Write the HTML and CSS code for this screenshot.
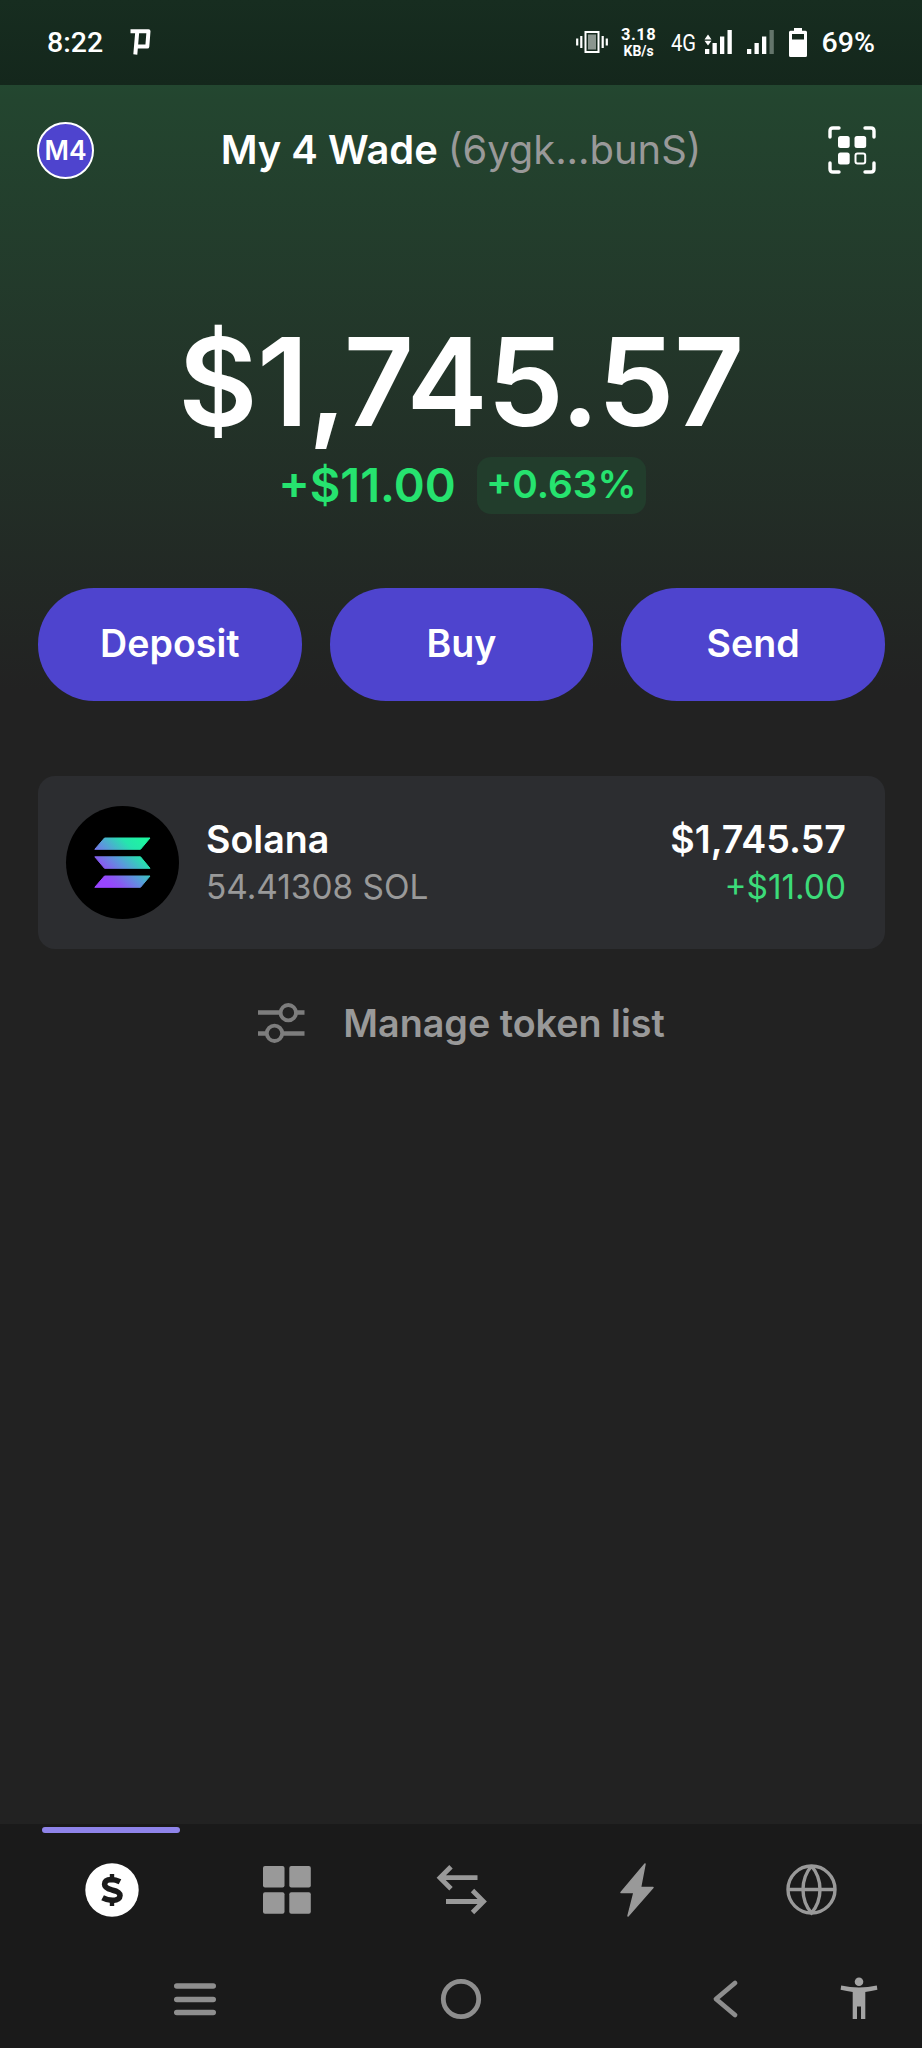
FILE: index.html
```html
<!DOCTYPE html>
<html lang="en">
<head>
<meta charset="utf-8">
<title>Wallet</title>
<link rel="stylesheet" href="styles.css">
</head>
<body>
<div class="screen">
  <div class="status">
    <span class="clock">8:22</span>
    <svg class="app-mark" width="22" height="27" viewBox="0 0 22 27"><path d="M1.500 2.200H19.500L18.300 17.500H8.500M8.300 2.200L6.300 25.500" fill="none" stroke="#fff" stroke-width="4" stroke-linejoin="round"/></svg>
    <div class="status-right">
      <svg class="vibrate" width="32" height="22" viewBox="0 0 32 22"><rect x="9.500" y="1" width="13" height="20" fill="none" stroke="#fff" stroke-width="2"/><rect x="12" y="3.500" width="8" height="15" fill="#8b968f"/><path d="M1.200 7.500v7M5.300 5v12M26.700 5v12M30.800 7.500v7" stroke="#fff" stroke-width="2.200"/></svg>
      <div class="speed"><span class="rate">3.18</span><span class="unit">KB/s</span></div>
      <span class="net">4G</span>
      <svg class="sig1" width="27" height="24" viewBox="0 0 27 24" fill="#fff"><path d="M3 4.500L6.500 9.500H-.5zM3 15.500L6.500 10.800H-.5z"/><rect x="0" y="19" width="4.300" height="5"/><rect x="7.500" y="13" width="4.300" height="11"/><rect x="15" y="6.500" width="4.300" height="17.500"/><rect x="22.500" y="0" width="4.300" height="24"/></svg>
      <svg class="sig2" width="27" height="24" viewBox="0 0 27 24" fill="#fff"><rect x="0" y="19" width="4.300" height="5"/><rect x="7.500" y="13" width="4.300" height="11"/><rect x="15" y="6.500" width="4.300" height="17.500"/><rect x="22.500" y="0" width="4.300" height="24" fill="#64756b"/></svg>
      <svg class="batt" width="18" height="29" viewBox="0 0 18 29"><path d="M5 0h8v2.800h3.500q1.500 0 1.500 1.500V27.500q0 1.500-1.500 1.500h-15Q0 29 0 27.500V4.300q0-1.500 1.500-1.500H5z" fill="#fff"/><rect x="3" y="6" width="12" height="5.500" fill="#15291d"/></svg>
      <span class="pct">69%</span>
    </div>
  </div>

  <div class="header">
    <div class="avatar">M4</div>
    <div class="title">My 4 Wade <span class="addr">(6ygk...bunS)</span></div>
    <svg class="scan" width="48" height="48" viewBox="0 0 48 48" fill="none" stroke="#fff"><path d="M2 11V5q0-3 3-3h6M37 2h6q3 0 3 3v6M46 37v6q0 3-3 3h-6M11 46H5q-3 0-3-3v-6" stroke-width="3.400" stroke-linecap="round"/><g fill="#fff" stroke="none"><rect x="10" y="10" width="11.700" height="12" rx="2.500"/><rect x="26.500" y="10" width="11.700" height="12" rx="2.500"/><rect x="10" y="26.500" width="11.700" height="12" rx="2.500"/></g><rect x="27.500" y="27.500" width="9.700" height="10" rx="2" stroke-width="2"/></svg>
  </div>

  <div class="balance">$1,745.57</div>
  <div class="change"><span class="delta">+$11.00</span><span class="badge">+0.63%</span></div>

  <div class="actions">
    <div class="btn">Deposit</div>
    <div class="btn">Buy</div>
    <div class="btn">Send</div>
  </div>

  <div class="token">
    <svg class="sol" width="113" height="113" viewBox="0 0 113 113"><defs><linearGradient id="g" gradientUnits="userSpaceOnUse" x1="78" y1="34" x2="38" y2="74"><stop offset="0" stop-color="#1df5a0"/><stop offset=".25" stop-color="#25e5ae"/><stop offset=".58" stop-color="#5b98dc"/><stop offset=".85" stop-color="#8a58f2"/><stop offset="1" stop-color="#9945ff"/></linearGradient></defs><circle cx="56.500" cy="56.500" r="56.500"/><g fill="url(#g)" stroke="url(#g)" stroke-width="1" stroke-linejoin="round"><path d="M38.500 32H84L74.500 43.300H28.800z"/><path d="M28.800 50.800H74.500L84 62.300H38.500z"/><path d="M38.500 70H84L74.500 81.300H28.800z"/></g></svg>
    <div class="col"><span class="name">Solana</span><span class="sub">54.41308 SOL</span></div>
    <div class="col right"><span class="name">$1,745.57</span><span class="sub up">+$11.00</span></div>
  </div>

  <div class="manage">
    <svg width="47" height="40" viewBox="0 0 47 40" fill="none" stroke="#7d7d7d"><path d="M0 9.500H22M39 9.500H46.500M0 30.500H8M25 30.500H46.500" stroke-width="4.600"/><circle cx="30.300" cy="9.700" r="7.700" stroke-width="3.800"/><circle cx="16.500" cy="30.300" r="7.700" stroke-width="3.800"/></svg>
    <span>Manage token list</span>
  </div>

  <div class="bottom">
    <div class="tabs">
      <div class="tab active"><svg width="54" height="54" viewBox="0 0 54 54"><circle cx="27" cy="27" r="26.700" fill="#fff"/><path d="M35 18.800Q30.500 16.500 26.500 16.500Q19.600 16.700 19.600 21.300Q19.600 25 27 26.900Q35 28.600 35 32.500Q34.800 37 27.600 37.400Q22.500 37.400 17.600 34.800" fill="none" stroke="#1a1a1a" stroke-width="5.600"/><path d="M27 11v6M27 37v6" stroke="#1a1a1a" stroke-width="4.400"/></svg></div>
      <div class="tab"><svg width="48" height="48" viewBox="0 0 48 48" fill="#999"><rect width="21.500" height="21.500" rx="2"/><rect x="26.300" width="21.500" height="21.500" rx="2"/><rect y="26.300" width="21.500" height="21.500" rx="2"/><rect x="26.300" y="26.300" width="21.500" height="21.500" rx="2"/></svg></div>
      <div class="tab"><svg width="50" height="50" viewBox="0 0 50 50" fill="none" stroke="#999" stroke-width="4.800"><path d="M40.500 12.700H3M14 1.700L3 12.700L14 23.700M9 36.500H46.500M35.500 25.500L46.500 36.500L35.500 47.500"/></svg></div>
      <div class="tab"><svg width="34" height="54" viewBox="0 0 34 54"><path d="M25 1L1 29.500H14L8 53L33 24.500H20.500z" fill="#999" stroke="#999" stroke-width="1.500" stroke-linejoin="round"/></svg></div>
      <div class="tab"><svg width="51" height="51" viewBox="0 0 51 51" fill="none" stroke="#999" stroke-width="3.400"><circle cx="25.500" cy="25.500" r="23.500"/><path d="M2 25.500H49M25.500 2Q17 12 17 25.500T25.500 49Q34 39 34 25.500T25.500 2"/></svg></div>
    </div>
    <div class="nav">
      <svg class="n-menu" width="42" height="33" viewBox="0 0 42 33" stroke="#8e8e8e" stroke-width="5.600" stroke-linecap="round"><path d="M2.800 3H39.200M2.800 16.500H39.200M2.800 29.500H39.200"/></svg>
      <svg class="n-home" width="42" height="42" viewBox="0 0 42 42"><circle cx="21" cy="21" r="17.700" fill="none" stroke="#8e8e8e" stroke-width="4.800"/></svg>
      <svg class="n-back" width="25" height="38" viewBox="0 0 25 38"><path d="M22 3L3 19L22 35" fill="none" stroke="#8e8e8e" stroke-width="4.800" stroke-linecap="round" stroke-linejoin="round"/></svg>
      <svg class="n-acc" width="38" height="43" viewBox="0 0 38 43" fill="#a3a3a3"><circle cx="19" cy="4.800" r="4.300"/><path d="M1.200 8.600Q19 12.500 36.800 8.600L37.400 12.800Q31 14.300 25.300 14.900V42H21V29.500H17V42H12.700V14.900Q7 14.300.6 12.800z"/></svg>
    </div>
  </div>
</div>
</body>
</html>
```

FILE: styles.css
```css
body { margin: 0; }
* { box-sizing: border-box; }
svg { display: block; flex: none; overflow: visible; }
.screen {
  width: 922px; height: 2048px; display: flex; flex-direction: column;
  background: linear-gradient(#234730 85px, #23452f 100px, #222 690px);
  color: #fff; font-family: Inter, "Liberation Sans", sans-serif;
  white-space: nowrap; overflow: hidden;
}
.status {
  flex: none; height: 85px; padding: 0 47px 0 47px; display: flex;
  background: linear-gradient(#172d20, #14271c);
  font-family: Roboto, sans-serif; font-size: 28.5px; font-weight: 500; line-height: 32px;
}
.clock, .pct { margin-top: 27px; }
.app-mark { margin: 29px 0 0 26px; }
.status-right { margin-left: auto; display: flex; align-items: flex-start; }
.vibrate { margin: 31px 14px 0 0; }
.speed { display: flex; flex-direction: column; align-items: center; width: 34px; margin: 26px 15px 0 0; font-weight: 700; }
.rate { font-size: 16.5px; line-height: 17px; letter-spacing: .5px; }
.unit { font-size: 14px; line-height: 16px; }
.net { width: 25px; margin: 27px 9px 0 0; font-size: 24px; font-weight: 400; transform: scaleX(.84); transform-origin: 0 0; }
.sig1 { margin: 30px 15px 0 0; }
.sig2 { margin: 30px 15px 0 0; }
.batt { margin: 28px 15px 0 0; }

.header { flex: none; height: 130px; padding: 0 46px 0 37px; display: flex; align-items: center; justify-content: space-between; }
.avatar { width: 57px; height: 57px; border: 2px solid #fff; border-radius: 50%; background: #4e44ce; display: flex; align-items: center; justify-content: center; font-size: 26.5px; font-weight: 600; }
.title { font-size: 39.9px; font-weight: 600; line-height: 48px; }
.addr { font-weight: 400; color: #999; }

.balance { flex: none; margin-top: 91px; font-size: 122px; font-weight: 600; line-height: 151px; letter-spacing: -.5px; text-align: center; }
.change { flex: none; height: 56px; padding-left: 2px; display: flex; align-items: center; justify-content: center; gap: 21px; }
.delta { margin-top: -2px; font-size: 47px; font-weight: 600; color: #26e36f; }
.badge { height: 57px; width: 169px; border-radius: 14px; background: #223d2c; color: #26e36f; font-size: 38.8px; font-weight: 600; line-height: 53px; text-align: center; }

.actions { flex: none; margin-top: 75px; padding: 0 37px 0 38px; display: grid; grid-template-columns: repeat(3, 1fr); gap: 28px; }
.btn { height: 113px; border-radius: 56px; background: #4e44ce; font-size: 37.6px; font-weight: 600; line-height: 111px; text-align: center; }

.token { flex: none; margin: 75px 37px 0 38px; height: 173px; padding: 0 39px 0 28px; border-radius: 17px; background: #2c2d30; display: flex; align-items: center; }
.col { display: flex; flex-direction: column; margin-left: 27px; gap: 2px; }
.right { margin-left: auto; align-items: flex-end; }
.name { font-size: 37.6px; font-weight: 600; line-height: 46px; }
.sub { font-size: 33.4px; line-height: 44px; color: #999; }
.up { color: #3cdb79; }

.manage { flex: none; height: 50px; margin-top: 49px; padding-left: 1px; display: flex; align-items: center; justify-content: center; gap: 38px; font-size: 37.7px; font-weight: 600; color: #999; }
.manage span { margin-top: -1px; }

.bottom { margin-top: auto; height: 224px; background: #1a1a1a; display: flex; flex-direction: column; }
.tabs { height: 131px; padding: 0 23px 0 24px; display: grid; grid-template-columns: repeat(5, 1fr); }
.tab { display: flex; align-items: center; justify-content: center; }
.active { position: relative; }
.active::before { content: ""; position: absolute; left: 18px; top: 3px; width: 138px; height: 6px; border-radius: 3px; background: #8f84ea; }
.nav { height: 93px; display: flex; padding: 0 44px 0 174px; }
.n-menu { margin-top: 28px; }
.n-home { margin: 23px 0 0 224px; }
.n-back { margin: 25px 0 0 231px; }
.n-acc { margin: 22px 0 0 auto; }
```
